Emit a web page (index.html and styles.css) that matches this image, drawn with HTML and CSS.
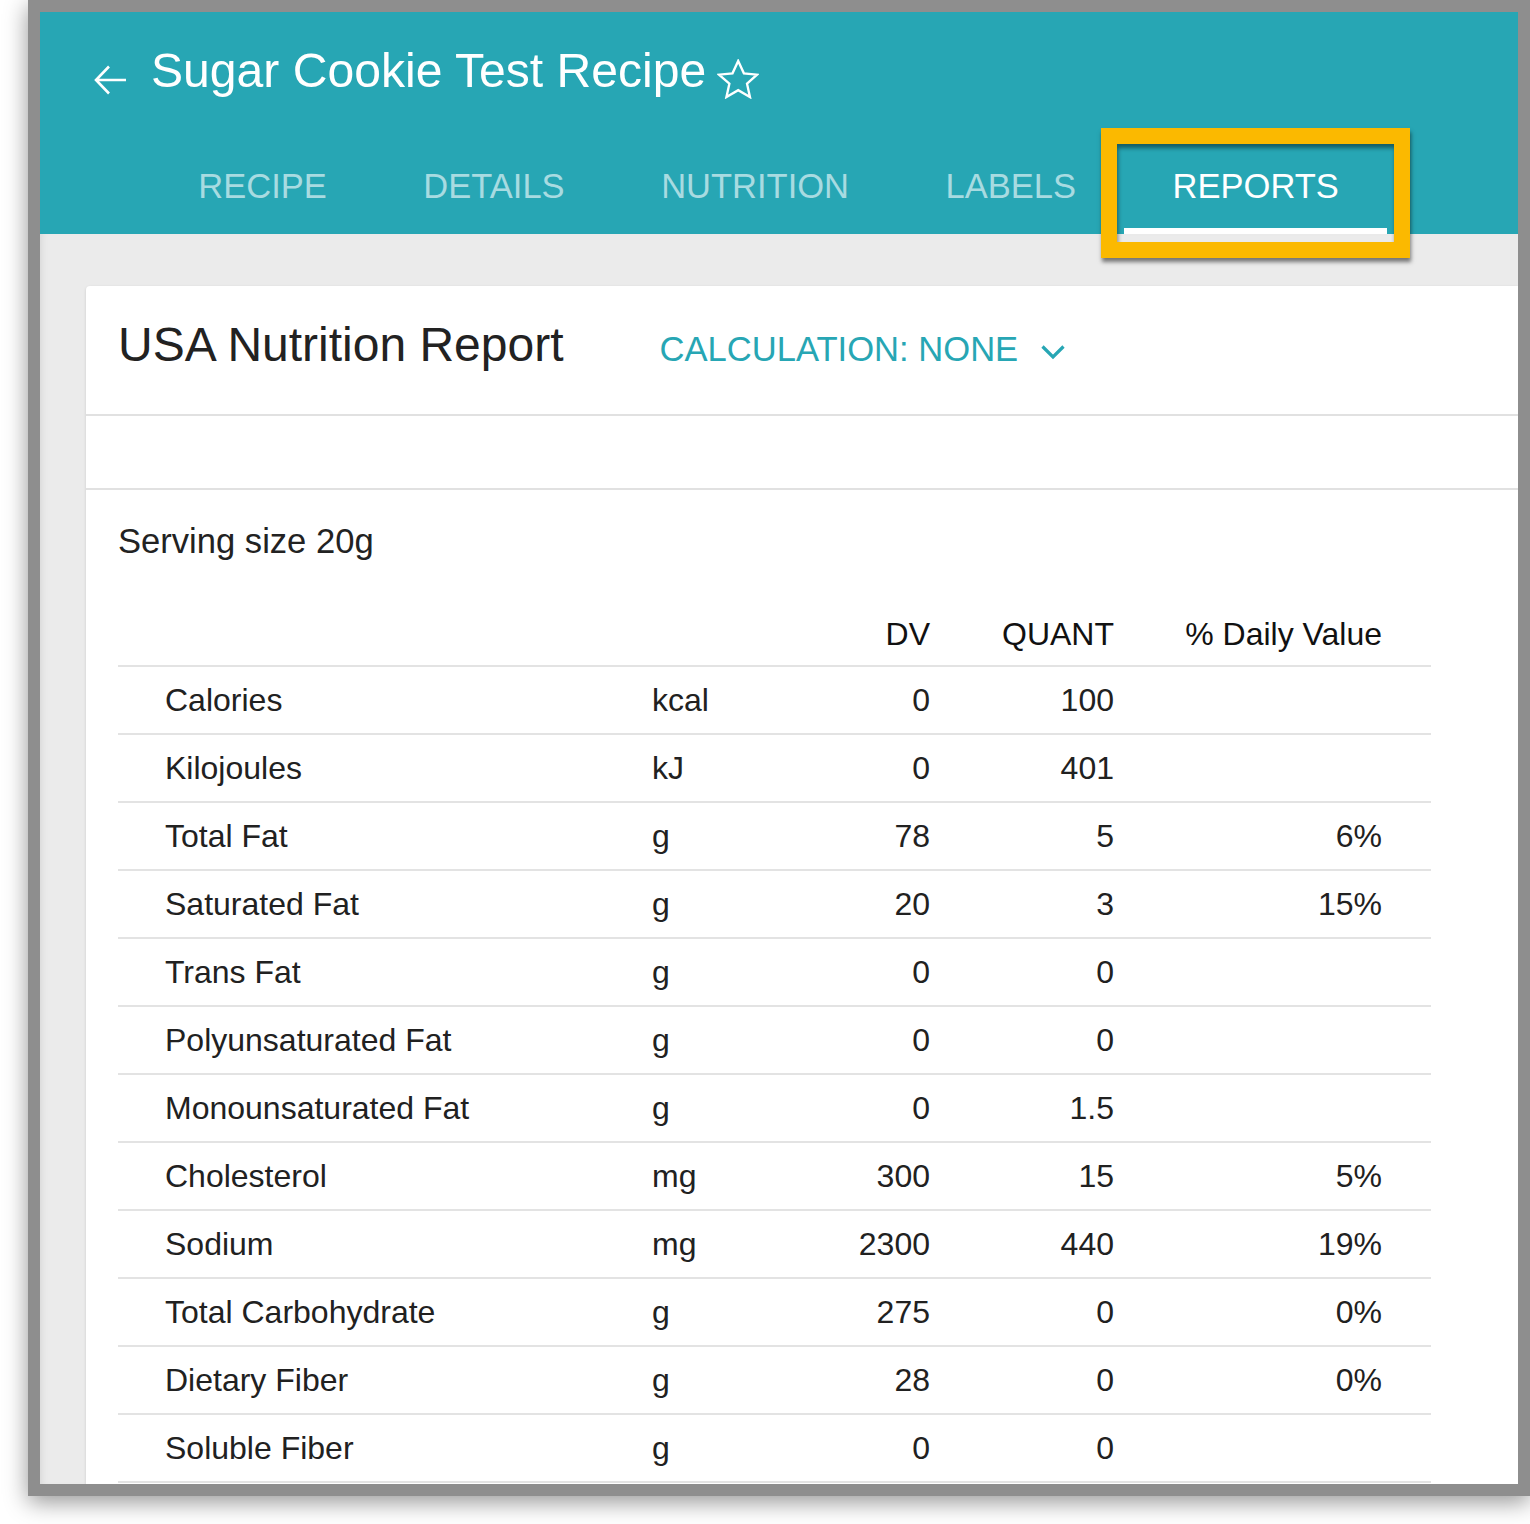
FILE: index.html
```html
<!DOCTYPE html>
<html lang="en">
<head>
<meta charset="utf-8">
<title>Sugar Cookie Test Recipe – Reports</title>
<link rel="stylesheet" href="styles.css">
</head>
<body>
<div class="frame">
  <div class="app">
    <header class="topbar">
      <div class="title-row">
        <svg class="back" width="32" height="32" viewBox="0 0 32 32" aria-hidden="true">
          <path d="M2 16 H32 M15 2.5 L2 16 L15 29.5" fill="none" stroke="#fff" stroke-width="2.6" stroke-linecap="butt" stroke-linejoin="miter"/>
        </svg>
        <h1 class="recipe-title">Sugar Cookie Test Recipe</h1>
        <svg class="star" width="42" height="40" viewBox="1.2 1.5 21.4 20.4" aria-hidden="true">
          <path d="M12 2.5 L14.9 8.8 L21.6 9.5 L16.5 14.1 L18 20.9 L12 17.4 L6 20.9 L7.5 14.1 L2.2 9.5 L9.1 8.8 Z" fill="none" stroke="#fff" stroke-width="1.2" stroke-linejoin="miter"/>
        </svg>
      </div>
      <nav class="tabs">
        <div class="tab">RECIPE</div>
        <div class="tab">DETAILS</div>
        <div class="tab">NUTRITION</div>
        <div class="tab">LABELS</div>
        <div class="tab active">REPORTS</div>
      </nav>
      <div class="highlight"></div>
    </header>
    <main class="main">
      <section class="card">
        <div class="card-head">
          <h2 class="report-title">USA Nutrition Report</h2>
          <div class="calc">
            <span>CALCULATION: NONE</span>
            <svg class="chev" width="26" height="17" viewBox="0 0 26 17" aria-hidden="true">
              <path d="M2.5 2.5 L13 13 L23.5 2.5" fill="none" stroke="#27a6b4" stroke-width="3.2"/>
            </svg>
          </div>
        </div>
        <div class="card-blank"></div>
        <div class="card-body">
          <div class="serving">Serving size 20g</div>
          <div class="ntable">
            <div class="nrow nhead">
              <div></div><div></div><div class="r">DV</div><div class="r">QUANT</div><div class="r">% Daily Value</div>
            </div>
            <div class="nrow"><div>Calories</div><div>kcal</div><div class="r">0</div><div class="r">100</div><div class="r"></div></div>
            <div class="nrow"><div>Kilojoules</div><div>kJ</div><div class="r">0</div><div class="r">401</div><div class="r"></div></div>
            <div class="nrow"><div>Total Fat</div><div>g</div><div class="r">78</div><div class="r">5</div><div class="r">6%</div></div>
            <div class="nrow"><div>Saturated Fat</div><div>g</div><div class="r">20</div><div class="r">3</div><div class="r">15%</div></div>
            <div class="nrow"><div>Trans Fat</div><div>g</div><div class="r">0</div><div class="r">0</div><div class="r"></div></div>
            <div class="nrow"><div>Polyunsaturated Fat</div><div>g</div><div class="r">0</div><div class="r">0</div><div class="r"></div></div>
            <div class="nrow"><div>Monounsaturated Fat</div><div>g</div><div class="r">0</div><div class="r">1.5</div><div class="r"></div></div>
            <div class="nrow"><div>Cholesterol</div><div>mg</div><div class="r">300</div><div class="r">15</div><div class="r">5%</div></div>
            <div class="nrow"><div>Sodium</div><div>mg</div><div class="r">2300</div><div class="r">440</div><div class="r">19%</div></div>
            <div class="nrow"><div>Total Carbohydrate</div><div>g</div><div class="r">275</div><div class="r">0</div><div class="r">0%</div></div>
            <div class="nrow"><div>Dietary Fiber</div><div>g</div><div class="r">28</div><div class="r">0</div><div class="r">0%</div></div>
            <div class="nrow"><div>Soluble Fiber</div><div>g</div><div class="r">0</div><div class="r">0</div><div class="r"></div></div>
          </div>
        </div>
      </section>
    </main>
  </div>
</div>
</body>
</html>
```

FILE: styles.css
```css
html, body {
  margin: 0;
  padding: 0;
  background: #ffffff;
  overflow: hidden;
}

body {
  font-family: "Liberation Sans", Arial, Helvetica, sans-serif;
  width: 1530px;
  height: 1524px;
}

.frame {
  margin-left: 28px;
  width: 1502px;
  height: 1496px;
  box-sizing: border-box;
  border: 12px solid #8e8e8e;
  box-shadow: 0 6px 22px rgba(0, 0, 0, 0.42);
  overflow: hidden;
}

.app {
  width: 1478px;
  height: 1472px;
  display: flex;
  flex-direction: column;
  background: #ebebeb;
}

/* ---------- header ---------- */
.topbar {
  position: relative;
  background: #27a6b4;
  height: 222px;
  flex: none;
  display: flex;
  flex-direction: column;
}

.title-row {
  display: flex;
  align-items: flex-start;
  padding: 30px 0 0 54px;
  height: 126px;
  box-sizing: border-box;
}

.back {
  margin-top: 22px;
  flex: none;
}

.recipe-title {
  margin: 0 0 0 25px;
  font-size: 48.1px;
  line-height: 56px;
  font-weight: 400;
  color: #ffffff;
  white-space: nowrap;
}

.star {
  margin: 17px 0 0 11px;
  flex: none;
}

.tabs {
  display: flex;
  padding-left: 110px;
  height: 96px;
}

.tab {
  padding: 0 48.3px;
  height: 96px;
  line-height: 96px;
  font-size: 34.5px;
  color: #a8dbe1;
  white-space: nowrap;
}

.tab.active {
  color: #ffffff;
  box-shadow: inset 0 -6px 0 #ffffff;
}

.highlight {
  position: absolute;
  left: 1061px;
  top: 116px;
  width: 309px;
  height: 130px;
  box-sizing: border-box;
  border: 16px solid #fbb900;
  box-shadow: 1px 4px 4px rgba(0, 0, 0, 0.5), inset 1px 4px 4px rgba(0, 0, 0, 0.45);
  pointer-events: none;
}

/* ---------- main ---------- */
.main {
  flex: 1;
  padding: 52px 0 0 46px;
  box-shadow: inset 6px 0 8px -6px rgba(0, 0, 0, 0.12);
  overflow: hidden;
}

.card {
  background: #ffffff;
  border-radius: 4px 0 0 0;
  box-shadow: 0 1px 3px rgba(0, 0, 0, 0.14);
  min-height: 1300px;
}

.card-head {
  display: flex;
  align-items: baseline;
  height: 130px;
  box-sizing: border-box;
  padding: 31px 0 0 32px;
  border-bottom: 2px solid #e1e1e1;
}

.report-title {
  margin: 0;
  font-size: 48px;
  line-height: 56px;
  font-weight: 400;
  color: #222222;
  white-space: nowrap;
}

.calc {
  display: inline-flex;
  align-items: center;
  margin-left: 96px;
  font-size: 34.6px;
  line-height: 40px;
  color: #27a6b4;
  white-space: nowrap;
}

.chev {
  margin: 6px 0 0 22px;
  flex: none;
}

.card-blank {
  height: 72px;
  border-bottom: 2px solid #e1e1e1;
}

.card-body {
  padding: 31px 0 0 32px;
}

.serving {
  font-size: 34.6px;
  line-height: 40px;
  color: #222222;
}

.ntable {
  width: 1313px;
  margin-top: 53px;
  color: #212121;
  font-size: 32px;
}

.nrow {
  display: grid;
  grid-template-columns: 487px 148px 130px 184px 268px;
  padding: 0 49px 0 47px;
  line-height: 66px;
  border-bottom: 2px solid #e3e3e3;
  white-space: nowrap;
}

.nrow.nhead {
  line-height: 40px;
  padding-bottom: 11px;
  color: #111111;
}

.r {
  text-align: right;
}
```
